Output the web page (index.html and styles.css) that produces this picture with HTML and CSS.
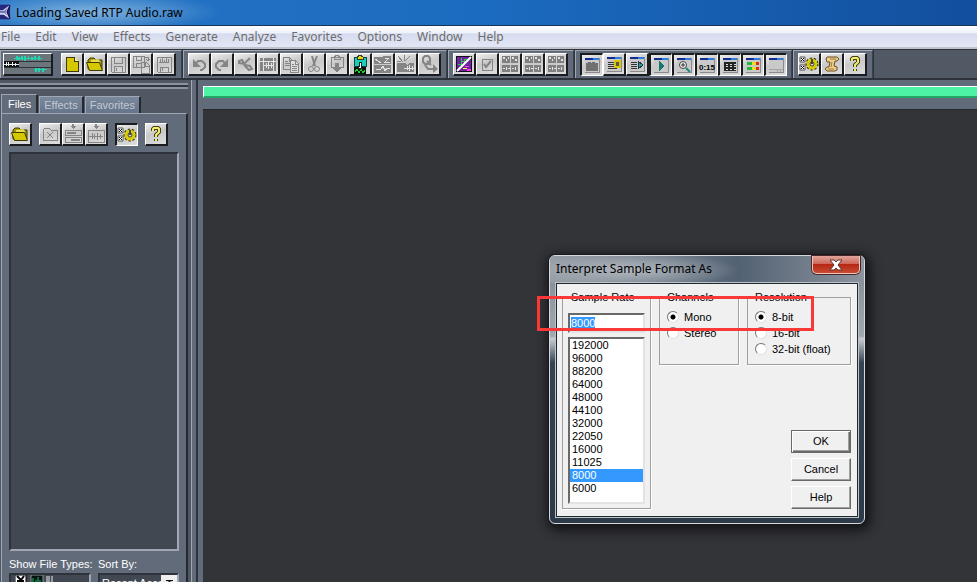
FILE: index.html
```html
<!DOCTYPE html>
<html lang="en">
<head>
  <meta charset="UTF-8" />
  <meta name="viewport" content="width=device-width, initial-scale=1.0"/>
  <title>Loading Saved RTP Audio.raw</title>
  <link rel="stylesheet" href="styles.css">
</head>
<body>

  <!-- shared icons -->
  <svg class="sprite" aria-hidden="true">
    <symbol id="folder" viewBox="0 0 20 20">
      <path d="M3 15V6l2-2h4l2 2h6v9z" fill="#a79a00" stroke="#3d3900"/>
      <path d="M6 6l7-1 2 2v1H6z" fill="#e8dc50"/>
      <path d="M1.500 8.500h13l3 8h-13z" fill="#d5c800" stroke="#3d3900"/>
    </symbol>
    <symbol id="gear" viewBox="0 0 20 20">
      <path d="M1 3h5v5H1zM1 11h5v5H1z" fill="#fff" stroke="#555"/>
      <path d="M2 4l3 3M5 4L2 7M2 12l3 3M5 12l-3 3" stroke="#111"/>
      <circle cx="13" cy="10" r="5" fill="none" stroke="#333300" stroke-width="3" stroke-dasharray="2 1.500"/>
      <circle cx="13" cy="10" r="4" fill="none" stroke="#d8cc00" stroke-width="3"/>
      <circle cx="13" cy="10" r="2" fill="#ddd" stroke="#444400"/>
      <path d="M12 5h2v5h-2z" fill="#444"/>
    </symbol>
    <symbol id="question" viewBox="0 0 20 20">
      <path d="M7 7V5l1-1h4l1 1v3l-3 3v2M10 15v2" fill="none" stroke="#444010" stroke-width="4"/>
      <path d="M7 7V5l1-1h4l1 1v3l-3 3v2M10 15v2" fill="none" stroke="#f2ec70" stroke-width="2"/>
    </symbol>
    <symbol id="batch" viewBox="0 0 20 20">
      <path d="M2 2h8v7H2zM11 2h7v7h-7zM2 11h8v7H2zM11 11h7v7h-7z" fill="#808080"/>
      <path d="M3 3h2v2H3zM6 5h1v2H6zM8 3h1v2H8zM12 3h2v2h-2zM15 5h2v2h-2zM3 14h2v1H3zM6 13h1v3H6zM8 14h2v1H8zM12 14h2v1h-2zM15 13h1v3h-1z" fill="#e4e4e4"/>
    </symbol>
    <symbol id="window" viewBox="0 0 20 20">
      <path d="M3 3h15v15H3z" fill="#8a8a8a"/>
      <path d="M3 3h14v14H3z" fill="#c9c9c9"/>
      <path d="M3 3h14v2H3z" fill="#2d7be0"/>
      <path d="M3 3h8v2H3z" fill="#122b91"/>
    </symbol>
  </svg>

  <div class="app">
    <header class="title-bar">
      <svg class="app-icon" viewBox="0 0 12 16"><path d="M0 0h11v16H0z" fill="#29277d"/><path d="M10 1L3 6H0v5h4l6 4-3-7z" fill="#d2d8ec"/><path d="M9 3L4 7H0v2h5l3 3-2-4z" fill="#6d79b4"/><path d="M11 1L8 8l3 7" fill="none" stroke="#10103f"/></svg>
      <h1>Loading Saved RTP Audio.raw</h1>
    </header>

    <nav class="menu-bar">
      <a href="#">File</a>
      <a href="#">Edit</a>
      <a href="#">View</a>
      <a href="#">Effects</a>
      <a href="#">Generate</a>
      <a href="#">Analyze</a>
      <a href="#">Favorites</a>
      <a href="#">Options</a>
      <a href="#">Window</a>
      <a href="#">Help</a>
    </nav>

    <div class="toolbar">
      <div class="tool-group file-group">
        <button class="tool-button view-switch" aria-label="Multitrack view">
          <svg viewBox="0 0 48 20"><path d="M0 0h48v20H0z" fill="#6b757b"/><path d="M0 7h48M0 14h48" stroke="#2c3238"/><path d="M10 4h29M31 16h13" stroke="#20d5b0"/><path d="M13 2v4M15 3v3M18 2v4M21 2v5M25 2v4M29 3v3M32 2v4M36 2v4M33 14v4M36 14v4M40 14v4" stroke="#20d5b0" stroke-width="2"/><path d="M0 7h15v6H0z" fill="#111"/><path d="M0 10h15M3 8v4M5 8v4M9 8v4M12 9v3" stroke="#eee"/></svg>
        </button>
        <div class="button-row">
          <button class="tool-button" aria-label="New"><svg viewBox="0 0 20 20"><path d="M4 3h8l4 4v10H4z" fill="#d5c800" stroke="#3d3900"/><path d="M12 3v4h4" fill="#f6f0a0" stroke="#3d3900"/></svg></button>
          <button class="tool-button" aria-label="Open"><svg class="smooth"><use href="#folder"/></svg></button>
          <button class="tool-button" aria-label="Save"><svg viewBox="0 0 20 20"><path d="M3 3h14v15H4l-1-1zM6 3v6h8V3M6 18v-6h8v6M8 14v3" class="line"/></svg></button>
          <button class="tool-button" aria-label="Save as"><svg viewBox="0 0 20 20"><path d="M2 2h11v11H2zM5 2v4h5V2M5 13V9h5M10 8h5l3 3v8h-8zM14 8v4h4M14 3h3v4M15 5l2 2 2-2" class="line"/></svg></button>
          <button class="tool-button" aria-label="Save selection"><svg viewBox="0 0 20 20"><path d="M3 3h14v15H4l-1-1zM6 18v-5h8v5M8 14v3M6 5v4M8 4v5M10 6v3M12 4v5M14 5v4M5 8h10" class="line"/></svg></button>
        </div>
      </div>

      <div class="tool-group">
        <div class="button-row">
          <button class="tool-button" aria-label="Undo"><svg class="smooth" viewBox="0 0 20 20"><path d="M6 11l3-4h4l3 3v3l-3 3h-2" class="line thick"/><path d="M4 5v8h8z" class="solid"/></svg></button>
          <button class="tool-button" aria-label="Redo"><svg class="smooth" viewBox="0 0 20 20"><path d="M14 11l-3-4H7l-3 3v3l3 3h2" class="line thick"/><path d="M16 5v8H8z" class="solid"/></svg></button>
          <button class="tool-button" aria-label="Repeat"><svg class="smooth" viewBox="0 0 20 20"><path d="M15 4l-6 6-5-1v-2l3-1 3 5 5 1 2 3-3 1-5-5" class="line thick"/></svg></button>
          <button class="tool-button" aria-label="Trim"><svg viewBox="0 0 20 20"><path d="M2 4h16v13H2z" class="solid"/><path d="M5 4v13M15 4v13M2 7h16M5 11h10M8 9v5M10 8v7M13 9v5" class="light"/></svg></button>
          <button class="tool-button" aria-label="Copy"><svg viewBox="0 0 20 20"><path d="M2 3h6l3 3v9H2zM8 3v4h3M4 7h3M4 9h5M4 11h5" class="line"/><path d="M9 6h5l3 3v9H9z" class="sheet"/><path d="M14 6v4h3M11 10h2M11 12h5M11 14h5M11 16h5" class="line"/></svg></button>
          <button class="tool-button" aria-label="Cut"><svg class="smooth" viewBox="0 0 20 20"><path d="M8 2l3 10M13 2l-4 10" class="line thick"/><circle cx="7" cy="15" r="2.500" class="line"/><circle cx="13" cy="15" r="2.500" class="line"/></svg></button>
          <button class="tool-button" aria-label="Paste"><svg viewBox="0 0 20 20"><path d="M4 3h12v10H4zM7 5h6V3l-3-2-3 2z" class="line"/><path d="M8 9h4v4h3l-5 6-5-6h3z" class="solid"/></svg></button>
          <button class="tool-button" aria-label="Paste to new"><svg viewBox="0 0 20 20"><path d="M4 3h12v9H4z" fill="#19cfb8" stroke="#064c4b"/><path d="M7 5V3l3-2 3 2v2z" fill="#eadb00" stroke="#333"/><path d="M4 13h12v7H4z" fill="#07120a"/><path d="M5 18l2-3 2 4 2-4 2 4 2-3" fill="none" stroke="#18dc28"/><path d="M9 8h2v4h2l-3 4-3-4h2z" fill="#fff" stroke="#222"/></svg></button>
          <button class="tool-button" aria-label="Mix paste"><svg viewBox="0 0 20 20"><path d="M1 3h9v7H1zM1 11h17v8H1zM10 2h8v8h-8z" class="solid"/><path d="M2 5l6 4M3 15h5l2-3 2 5 2-3 3 1M12 4h4l-4 4h5" class="light"/></svg></button>
          <button class="tool-button" aria-label="Convert"><svg viewBox="0 0 20 20"><path d="M1 9h8l2 2 2-2h5v9H1z" class="solid"/><path d="M2 2l5 6M8 1v6M14 2L9 7M1 7h4" class="line"/><path d="M8 14h10M11 12v4M13 11v6M16 12v4" class="light"/></svg></button>
          <button class="tool-button" aria-label="Quick filter"><svg class="smooth" viewBox="0 0 20 20"><path d="M6 2h3l2 2v4l-2 2H6L4 8V4zM8 7l4 4" class="line thick"/><path d="M6 11l3 4h6" class="line thick"/><path d="M14 10l5 5-5 4z" class="solid"/></svg></button>
        </div>
      </div>

      <div class="tool-group">
        <div class="button-row">
          <button class="tool-button" aria-label="Spectral view"><svg viewBox="0 0 20 20"><path d="M2 2h16v16H2z" fill="#101018"/><path d="M3 3h14v14H3z" fill="#6f22a2"/><path d="M4 10h3V4v9V7h3v4V5h3v3" fill="none" stroke="#22d53a"/><path d="M17 3L3 17" class="smooth" stroke="#fff" stroke-width="2"/><path d="M11 12h4v1h-4zM13 15h4v2h-4z" fill="#ff38e0"/><path d="M9 14h4v1H9z" fill="#ff4"/></svg></button>
          <button class="tool-button" aria-label="Settings"><svg viewBox="0 0 20 20"><path d="M5 5h10v11H5z" class="line"/><path d="M7 10l2 3 5-6" class="smooth line thick"/></svg></button>
          <button class="tool-button" aria-label="Batch 1"><svg><use href="#batch"/></svg></button>
          <button class="tool-button" aria-label="Batch 2"><svg><use href="#batch"/></svg></button>
          <button class="tool-button" aria-label="Batch 3"><svg><use href="#batch"/></svg></button>
        </div>
      </div>

      <div class="tool-group window-group">
        <div class="button-row">
          <button class="tool-button pressed" aria-label="Organizer"><svg viewBox="0 0 20 20"><use href="#window"/><path d="M4 8h2V7h3v1h1V7h3v1h3v8H4z" fill="#707070"/></svg></button>
          <button class="tool-button" aria-label="Cue list"><svg viewBox="0 0 20 20"><use href="#window"/><path d="M4 8h6M4 10h6M4 12h6M4 14h9" stroke="#333"/><path d="M11 7h5v6h-5z" fill="#555" stroke="#d5c800" stroke-width="2"/></svg></button>
          <button class="tool-button" aria-label="Play list"><svg viewBox="0 0 20 20"><use href="#window"/><path d="M4 8h6M4 10h6M4 12h6M4 14h6" stroke="#333"/><path d="M11 7l5 4-5 4z" fill="#2a9a8c" stroke="#234"/></svg></button>
          <button class="tool-button pressed" aria-label="Transport"><svg viewBox="0 0 20 20"><use href="#window"/><path d="M8 6l5 5-5 5z" fill="#16766c"/></svg></button>
          <button class="tool-button pressed" aria-label="Zoom"><svg class="smooth" viewBox="0 0 20 20"><use href="#window"/><circle cx="9" cy="10" r="3.500" fill="#eee" stroke="#444"/><path d="M7 10h4M9 8v4" stroke="#333"/><path d="M12 13l4 4" stroke="#16897a" stroke-width="2"/></svg></button>
          <button class="tool-button pressed" aria-label="Time"><svg viewBox="0 0 20 20"><use href="#window"/><text x="10" y="15" class="clock">0:15</text></svg></button>
          <button class="tool-button pressed" aria-label="Selection"><svg viewBox="0 0 20 20"><use href="#window"/><path d="M4 7h12v9H4z" fill="#222"/><path d="M6 9h2v1H6zM10 9h2v1h-2zM14 9h2v1h-2zM6 11h2v1H6zM10 11h2v1h-2zM14 11h2v1h-2zM6 14h2v1H6zM10 14h2v1h-2zM14 14h2v1h-2z" fill="#ddd"/></svg></button>
          <button class="tool-button pressed" aria-label="Levels"><svg viewBox="0 0 20 20"><use href="#window"/><path d="M4 7h5v3H4zM4 12h5v3H4z" fill="#20bb38"/><path d="M9 7h4v3H9zM9 12h4v3H9z" fill="#eddf20"/><path d="M13 7h3v3h-3zM13 12h3v3h-3z" fill="#df2a15"/></svg></button>
          <button class="tool-button pressed" aria-label="Status bar"><svg viewBox="0 0 20 20"><use href="#window"/><path d="M3 14h14M11 15v2M14 15v2" stroke="#a5a5a5"/></svg></button>
        </div>
      </div>

      <div class="tool-group">
        <div class="button-row">
          <button class="tool-button" aria-label="Preferences"><svg class="smooth"><use href="#gear"/></svg></button>
          <button class="tool-button" aria-label="Scripts"><svg class="smooth" viewBox="0 0 20 20"><path d="M5 3h10l2 2-2 2h-2l-1 5 3 1v3l-2 1H5l-2-2 2-2h2l1-5H5L4 5z" fill="#edcf8c" stroke="#6b4d20"/><path d="M8 5h6M10 8l-1 5M6 15h6" fill="none" stroke="#a57a35"/></svg></button>
          <button class="tool-button" aria-label="Help"><svg class="smooth"><use href="#question"/></svg></button>
        </div>
      </div>
    </div>

    <main class="workspace">
      <aside class="organizer">
        <div class="grip"></div>
        <div class="tabs" role="tablist">
          <button class="tab active" role="tab">Files</button>
          <button class="tab" role="tab">Effects</button>
          <button class="tab" role="tab">Favorites</button>
        </div>
        <div class="file-panel">
          <div class="file-tools">
            <button class="tool-button" aria-label="Open file"><svg class="smooth"><use href="#folder"/></svg></button>
            <div class="button-row">
              <button class="tool-button" aria-label="Close file"><svg viewBox="0 0 20 20"><path d="M3 16V6l2-2h4l2 2h6v10zM7 8l6 6M13 8l-6 6" class="line"/></svg></button>
              <button class="tool-button" aria-label="Insert into multitrack"><svg viewBox="0 0 20 20"><path d="M2 6h16v5H2zM2 13h16v5H2z" class="line"/><path d="M9 0h2v2h2l-3 3-3-3h2zM4 8h9v2H4zM8 15h9v2H8z" class="solid"/></svg></button>
              <button class="tool-button" aria-label="Edit file"><svg viewBox="0 0 20 20"><path d="M2 6h16v12H2zM3 12h14M6 9v6M8 10v5M11 9v7M14 10v5" class="line"/><path d="M9 0h2v2h2l-3 3-3-3h2z" class="solid"/></svg></button>
            </div>
            <button class="tool-button pressed" aria-label="Advanced options"><svg class="smooth"><use href="#gear"/></svg></button>
            <button class="tool-button" aria-label="Help"><svg class="smooth"><use href="#question"/></svg></button>
          </div>
          <div class="file-list"></div>
          <div class="filters">
            <div class="filter types">
              <label for="fileTypes">Show File Types:</label>
              <button class="type-box" id="fileTypes">
                <svg viewBox="0 0 40 16"><path d="M0 0h11v14H0z" fill="#fff" stroke="#000"/><path d="M2 1l4 4 3-4M2 6h7" fill="none" stroke="#000" stroke-width="2"/><path d="M16 0h12v14H16z" fill="#06130e" stroke="#8b969c"/><path d="M18 3v5M21 5v5M23 2v6M25 5v5" stroke="#1dbd72"/><path d="M32 1v10M34 1v10M37 1v10" stroke="#eee"/></svg>
              </button>
            </div>
            <div class="filter sort">
              <label for="sortBy">Sort By:</label>
              <select id="sortBy"><option>Recent Access</option></select>
            </div>
          </div>
        </div>
      </aside>
      <div class="splitter"></div>
      <section class="editor">
        <div class="overview"></div>
        <div class="wave-area"></div>
      </section>
    </main>
  </div>

  <div class="dialog" role="dialog" aria-labelledby="dialogTitle">
    <div class="dialog-title">
      <h2 id="dialogTitle">Interpret Sample Format As</h2>
      <button class="close-button" aria-label="Close"><svg viewBox="0 0 14 12"><path d="M1 1h4l2 2 2-2h4L9 6l4 5H9L7 9l-2 2H1l4-5z" fill="#fff" stroke="#5d3531"/></svg></button>
    </div>
    <form class="dialog-body">
      <fieldset class="rate-group">
        <legend>Sample Rate</legend>
        <input class="rate-input" type="text" value="8000" aria-label="Sample rate">
        <select class="rate-list" size="12" aria-label="Sample rates">
          <option>192000</option>
          <option>96000</option>
          <option>88200</option>
          <option>64000</option>
          <option>48000</option>
          <option>44100</option>
          <option>32000</option>
          <option>22050</option>
          <option>16000</option>
          <option>11025</option>
          <option selected>8000</option>
          <option>6000</option>
        </select>
      </fieldset>
      <fieldset class="radio-group">
        <legend>Channels</legend>
        <label><input type="radio" name="channels" checked>Mono</label>
        <label><input type="radio" name="channels">Stereo</label>
      </fieldset>
      <div class="side">
        <fieldset class="radio-group">
          <legend>Resolution</legend>
          <label><input type="radio" name="resolution" checked>8-bit</label>
          <label><input type="radio" name="resolution">16-bit</label>
          <label><input type="radio" name="resolution">32-bit (float)</label>
        </fieldset>
        <div class="dialog-buttons">
          <button type="button" class="default">OK</button>
          <button type="button">Cancel</button>
          <button type="button">Help</button>
        </div>
      </div>
    </form>
    <div class="marker"></div>
  </div>

  <script>
    document.querySelector('.rate-input').select();
  </script>
</body>
</html>
```
FILE: styles.css
```css
* {
  box-sizing: border-box;
}

body {
  margin: 0;
  font-family: "Liberation Sans", Arial, sans-serif;
  font-size: 11px;
  color: #000;
  overflow: hidden;
}

button,
input,
select {
  font: inherit;
  margin: 0;
  padding: 0;
  border-radius: 0;
}

.sprite {
  display: none;
}

.app {
  display: flex;
  flex-direction: column;
  height: 100vh;
  background: #505864;
}

.title-bar {
  display: flex;
  align-items: center;
  gap: 5px;
  height: 26px;
  flex-shrink: 0;
  padding-bottom: 1px;
  background:
    radial-gradient(ellipse 130px 20px at 90px 12px, rgba(150, 195, 230, 0.8), transparent),
    linear-gradient(90deg, #2674c4, #1b6bc0 50%, #124f9d);
  border-bottom: 1px solid #1a3258;
}

.app-icon {
  width: 11px;
  height: 16px;
}

.title-bar h1,
.dialog-title h2 {
  margin: 0;
  font-family: "Noto Sans", sans-serif;
  font-size: 12px;
  font-weight: normal;
}

.menu-bar {
  display: flex;
  align-items: center;
  gap: 15px;
  height: 23px;
  flex-shrink: 0;
  padding: 0 1px;
  background: linear-gradient(#fcfdff, #eef1fa 35%, #d6dcef 36%, #e2e6f4);
  border-bottom: 2px solid #bfc3cb;
}

.menu-bar a {
  font-family: "Noto Sans", sans-serif;
  font-size: 12px;
  color: #6d6d6d;
  text-decoration: none;
}

.toolbar {
  display: flex;
  gap: 1px;
  height: 31px;
  flex-shrink: 0;
  background: #2d323b;
  border-top: 1px solid #2d323b;
  border-bottom: 2px solid #2d323b;
}

.tool-group {
  display: flex;
  gap: 8px;
  padding: 2px 5px 2px 4px;
  background: #626b79;
  border: 1px solid #a0a7b3;
  border-right-color: #3c434e;
  border-bottom: 0;
}

.file-group {
  padding-left: 2px;
}

.window-group {
  padding-right: 4px;
}

.toolbar::after {
  content: "";
  flex: 1;
  background: #515965;
}

.button-row {
  display: flex;
}

.tool-button {
  width: 23px;
  height: 23px;
  padding: 0;
  background: linear-gradient(160deg, #eee, #c8c8c8 45%, #dedede);
  border: 1px solid #fff;
  border-right: 2px solid #1a1c20;
  border-bottom: 2px solid #1a1c20;
}

.tool-button svg {
  display: block;
  width: 20px;
  height: 20px;
  shape-rendering: crispEdges;
}

.tool-button .smooth {
  shape-rendering: auto;
}

.tool-button.pressed {
  border: 1px solid #fff;
  border-left: 2px solid #1a1c20;
  border-top: 2px solid #1a1c20;
}

.tool-button.view-switch {
  width: 50px;
}

.tool-button.view-switch svg {
  width: 47px;
}

.line {
  fill: none;
  stroke: #858585;
}

.thick {
  stroke-width: 2;
}

.solid {
  fill: #858585;
}

.sheet {
  fill: #ddd;
  stroke: #858585;
}

.light {
  fill: none;
  stroke: #e4e4e4;
}

.clock {
  font-size: 8px;
  font-weight: bold;
  text-anchor: middle;
}

.workspace {
  display: flex;
  flex: 1;
  min-height: 0;
}

.organizer {
  display: flex;
  flex-direction: column;
  width: 191px;
  padding: 3px 3px 0 0;
  flex-shrink: 0;
}

.grip {
  height: 6px;
  flex-shrink: 0;
  border-top: 2px solid #8b93a0;
  border-bottom: 2px solid #8b93a0;
  background: #30353e;
}

.tabs {
  display: flex;
  align-items: flex-end;
  gap: 1px;
  height: 24px;
  flex-shrink: 0;
  padding-left: 1px;
}

.tab {
  height: 17px;
  padding: 0 4px;
  color: #c3c8d0;
  background: linear-gradient(#7a889d, #66758b);
  border: 1px solid #a0a7b3;
  border-right: 2px solid #24282f;
  border-bottom: 0;
}

.tab.active {
  height: 19px;
  padding: 0 5px 0 6px;
  color: #fff;
  background: #626b79;
}

.file-panel {
  display: flex;
  flex-direction: column;
  flex: 1;
  min-height: 0;
  margin-left: 1px;
  padding: 9px 7px 0;
  background: #626b79;
  border: 1px solid #a0a7b3;
  border-right: 2px solid #24282f;
  border-bottom: 0;
}

.file-tools {
  display: flex;
  gap: 7px;
  flex-shrink: 0;
}

.file-list {
  flex: 1;
  margin-top: 6px;
  background: #414851;
  border: 2px solid #2d323b;
  border-right-color: #a0a7b3;
  border-bottom-color: #a0a7b3;
}

.filters {
  display: flex;
  gap: 7px;
  height: 31px;
  flex-shrink: 0;
  overflow: hidden;
  color: #fff;
}

.filter {
  display: flex;
  flex-direction: column;
  gap: 2px;
  padding-top: 6px;
}

.filter label {
  line-height: 14px;
  white-space: nowrap;
}

.types {
  width: 82px;
}

.sort {
  flex: 1;
}

.type-box,
.filter select {
  width: 100%;
  height: 20px;
  flex-shrink: 0;
  background: #414851;
  border: 2px solid #2d323b;
  border-right-color: #a0a7b3;
  color: #fff;
}

.type-box svg {
  display: block;
  width: 40px;
  height: 16px;
  margin-left: 4px;
}

.filter select {
  appearance: none;
  padding-left: 2px;
  background: linear-gradient(#111, #111) right 4px top 5px / 7px 4px no-repeat,
    linear-gradient(#eee, #eee) right / 16px 100% no-repeat, #414851;
}

.splitter {
  width: 7px;
  background: #626b79;
  border-left: 1px solid #a0a7b3;
  border-right: 2px solid #2d323b;
}

.editor {
  display: flex;
  flex-direction: column;
  flex: 1;
  padding: 6px 0 0 5px;
  background: #626b79;
}

.overview {
  height: 12px;
  background: #4df3a4;
  border: 1px solid #fff;
  border-right: 0;
  border-bottom: 2px solid #24a468;
}

.wave-area {
  flex: 1;
  margin-top: 11px;
  background: #333438;
  border-top: 1px solid #25272b;
}

.dialog {
  position: absolute;
  left: 549px;
  top: 255px;
  width: 316px;
  padding: 0 6px 6px;
  background: linear-gradient(#7e868f, #a1a8b0 30%, #c9cdd1 31%, #344352 40%, #2b3949);
  border: 1px solid #d3d9df;
  border-radius: 6px;
  box-shadow: 0 0 0 1px #17191c, 2px 3px 12px 3px #101113;
}

.dialog-title {
  display: flex;
  justify-content: space-between;
  align-items: flex-start;
  height: 27px;
  margin: 0 -6px;
  padding: 0 4px 0 6px;
  background:
    radial-gradient(ellipse 110px 18px at 80px 14px, rgba(185, 190, 196, 0.9), transparent),
    linear-gradient(90deg, #949ca4, #526173 60%, #8c949e);
  border-radius: 5px 5px 0 0;
}

.dialog-title h2 {
  line-height: 26px;
}

.close-button {
  display: flex;
  align-items: center;
  justify-content: center;
  width: 48px;
  height: 18px;
  background: linear-gradient(#e1a49b, #cd6558 48%, #b62814 50%, #c94b31);
  border: 1px solid #eec4bd;
  border-top: 0;
  border-radius: 0 0 5px 5px;
  box-shadow: 0 0 0 1px #482626;
}

.close-button svg {
  width: 14px;
  height: 12px;
}

.dialog-body {
  display: grid;
  grid-template-columns: 89px 80px 1fr;
  align-items: start;
  gap: 8px;
  padding: 7px 6px 7px 5px;
  background: #f0f0f0;
  border: 1px solid #1f2932;
  box-shadow: 0 0 0 1px #bdc3c9;
}

fieldset {
  min-width: 0;
  margin: 0;
  padding: 0;
  border: 1px solid #a0a0a0;
  box-shadow: 1px 1px 0 #fff;
}

legend {
  margin-left: -2px;
  padding: 0 2px;
  line-height: 13px;
}

.rate-group {
  display: flex;
  flex-direction: column;
  height: 218px;
  padding: 9px 5px 4px;
}

.rate-group legend {
  margin-left: 1px;
}

.rate-input,
.rate-list {
  width: 100%;
  background: #fff;
  border: 2px solid #696969;
  border-right-color: #e3e3e3;
  border-bottom-color: #e3e3e3;
  outline: 0;
}

.rate-input {
  height: 20px;
  padding: 0 1px;
}

.rate-input::selection {
  color: #fff;
  background: #3399ff;
}

.rate-list {
  height: 169px;
  margin-top: 4px;
  overflow: hidden;
}

.rate-list option {
  min-height: 13px;
  padding: 0 2px;
  line-height: 13px;
}

.rate-list option:checked {
  color: #fff;
  background: linear-gradient(#3399ff, #3399ff);
}

.radio-group {
  height: 74px;
  padding: 5px 7px 0;
}

.radio-group label {
  display: flex;
  align-items: center;
  gap: 5px;
  height: 16px;
  white-space: nowrap;
}

.radio-group input {
  appearance: none;
  width: 12px;
  height: 12px;
  background: #fff;
  border: 1px solid #777;
  border-right-color: #e3e3e3;
  border-bottom-color: #e3e3e3;
  border-radius: 50%;
}

.radio-group input:checked {
  background: radial-gradient(circle, #000 2px, #fff 3px);
}

.side {
  display: flex;
  flex-direction: column;
  justify-content: space-between;
  align-self: stretch;
}

.dialog-buttons {
  display: flex;
  flex-direction: column;
  align-self: flex-end;
  gap: 5px;
  width: 60px;
}

.dialog-buttons button {
  height: 23px;
  padding-bottom: 2px;
  background: #f0f0f0;
  border: 1px solid #fff;
  border-right-color: #696969;
  border-bottom-color: #696969;
  box-shadow: inset -1px -1px 0 #a0a0a0;
}

.dialog-buttons .default {
  border: 1px solid #696969;
  box-shadow: inset 1px 1px 0 #fff, inset -1px -1px 0 #696969, inset -2px -2px 0 #a0a0a0;
}

/* highlights the chosen rate, channel and resolution */
.marker {
  position: absolute;
  left: -13px;
  top: 40px;
  width: 277px;
  height: 35px;
  border: 3px solid #fb3838;
  pointer-events: none;
}
```
